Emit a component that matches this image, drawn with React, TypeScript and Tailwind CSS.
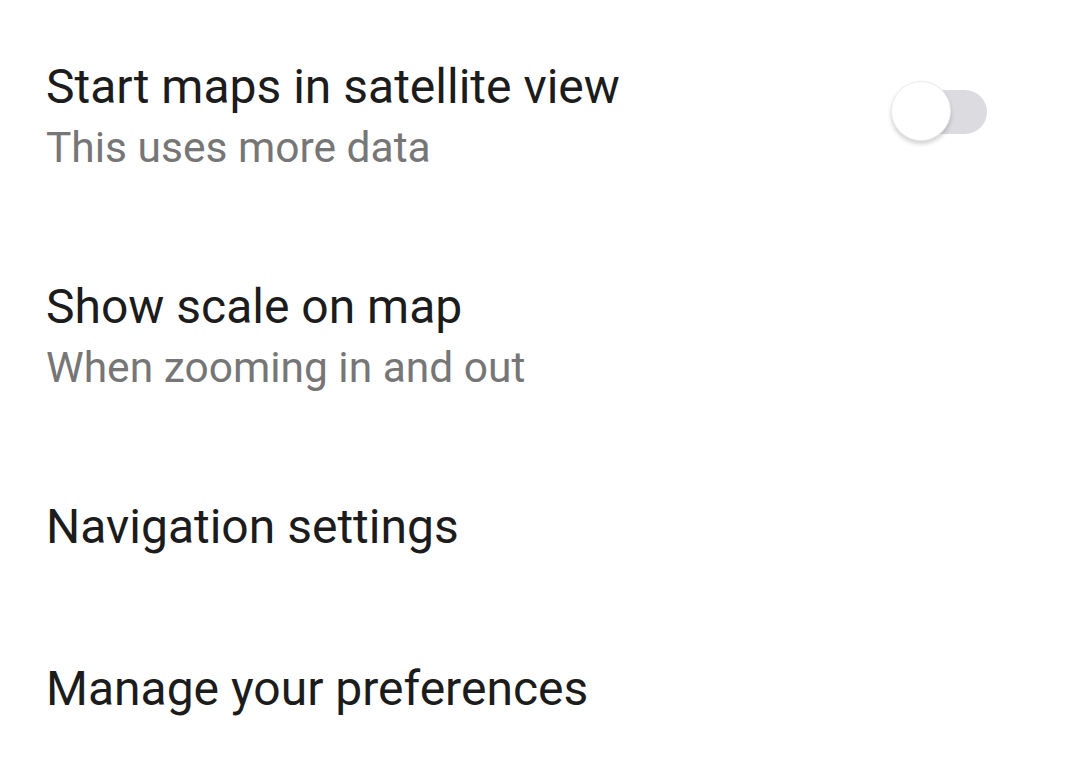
type SettingRowProps = {
  title: string;
  subtitle?: string;
  toggle?: boolean;
  className?: string;
};

const Toggle = () => {
  return (
    <div className="relative mt-[23px] mr-[81px] h-[60px] w-[96px] shrink-0">
      <div className="absolute top-[9px] right-0 h-[44px] w-[88px] rounded-full bg-[#dcdce0]" />
      <div className="absolute top-0 left-0 h-[60px] w-[60px] rounded-full border border-[#ececee] bg-white shadow-[0_3px_4px_rgba(0,0,0,0.18)]" />
    </div>
  );
};

const SettingRow = ({ title, subtitle, toggle, className }: SettingRowProps) => {
  return (
    <div className={`flex items-start justify-between pl-[46px] ${className ?? ""}`}>
      <div className="flex flex-col">
        <span className="text-[48px] leading-[58px] text-[#1c1c1c]">{title}</span>
        {subtitle && (
          <span className="text-[42.5px] leading-[64px] text-[#767676]">{subtitle}</span>
        )}
      </div>
      {toggle && <Toggle />}
    </div>
  );
};

export default function App() {
  return (
    <div
      className="h-[763px] w-[1068px] overflow-hidden bg-white pt-[9px]"
      style={{ fontFamily: "Roboto, 'Noto Sans', sans-serif" }}
    >
      <SettingRow
        title="Start maps in satellite view"
        subtitle="This uses more data"
        toggle
        className="py-[49px]"
      />
      <SettingRow
        title="Show scale on map"
        subtitle="When zooming in and out"
        className="py-[49px]"
      />
      <SettingRow title="Navigation settings" className="pt-[49px] pb-[55px]" />
      <SettingRow title="Manage your preferences" className="py-[49px]" />
    </div>
  );
}
